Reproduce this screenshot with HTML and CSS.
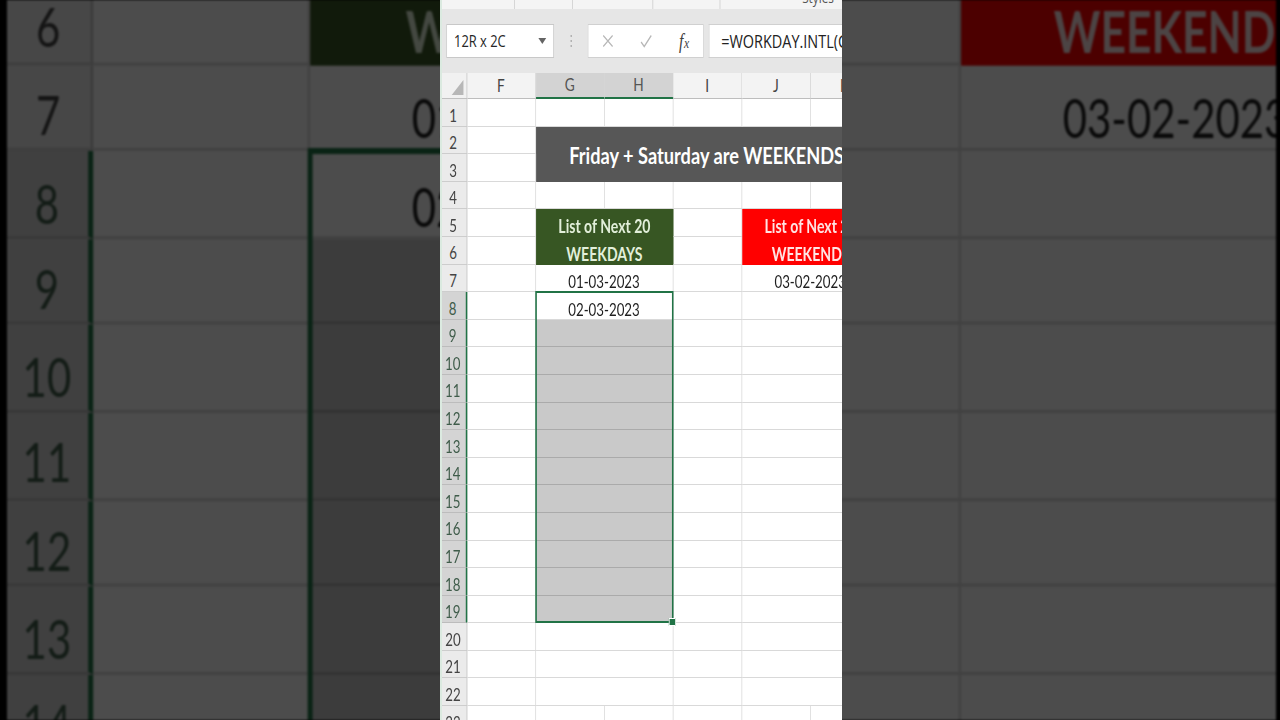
FILE: index.html
```html
<!DOCTYPE html>
<html lang="en">
<head>
<meta charset="utf-8">
<title>WORKDAY.INTL – Excel</title>
<link rel="stylesheet" href="styles.css">
</head>
<body>
<div class="stage">
  <div class="backdrop" aria-hidden="true"><div class="backdrop-frame"></div></div>
  <main class="frame">
    <div class="excel">
      <div class="ribbon">
        <div class="rgroup g1"></div>
        <div class="rgroup g2"></div>
        <div class="rgroup g3"></div>
        <div class="rgroup g4"></div>
        <div class="rgroup g5"><span class="rlabel">Styles</span></div>
      </div>
      <div class="formula-bar">
        <div class="name-box"><span class="name-text">12R x 2C</span><span class="caret"></span></div>
        <div class="grip"><svg viewBox="0 0 6 14" width="6" height="14"><circle cx="3" cy="2" r="1.1"/><circle cx="3" cy="7" r="1.1"/><circle cx="3" cy="12" r="1.1"/></svg></div>
        <div class="fx-box">
          <span class="fx-slot"><svg class="ico" viewBox="0 0 16 14" width="16" height="14" preserveAspectRatio="none"><path d="M2 1.5L14 12.5M14 1.5L2 12.5"/></svg></span>
          <span class="fx-slot"><svg class="ico" viewBox="0 0 16 14" width="16" height="14" preserveAspectRatio="none"><path d="M1.5 8L5.5 12.5L14.5 1.5"/></svg></span>
          <span class="fx-slot fx"><i>f</i><i class="fx-x">x</i></span>
        </div>
        <div class="formula-input">=WORKDAY.INTL(G7,1,7)</div>
      </div>
      <div class="sheet">
        <div class="c corner"><span class="corner-tri"></span></div>
        <div class="c ch">F</div><div class="c ch on">G</div><div class="c ch on">H</div><div class="c ch">I</div><div class="c ch">J</div><div class="c ch">K</div><div class="c ch">L</div>

        <div class="c rh">1</div><div class="c"></div><div class="c"></div><div class="c"></div><div class="c"></div><div class="c"></div><div class="c"></div><div class="c"></div>
        <div class="c rh">2</div><div class="c"></div><div class="c title">Friday + Saturday are WEEKENDS</div>
        <div class="c rh">3</div><div class="c"></div>
        <div class="c rh">4</div><div class="c"></div><div class="c"></div><div class="c"></div><div class="c"></div><div class="c"></div><div class="c"></div><div class="c"></div>
        <div class="c rh">5</div><div class="c"></div><div class="c span2 green">List of Next 20</div><div class="c"></div><div class="c span2 red">List of Next 20</div><div class="c"></div>
        <div class="c rh">6</div><div class="c"></div><div class="c span2 green">WEEKDAYS</div><div class="c"></div><div class="c span2 red">WEEKENDS</div><div class="c"></div>
        <div class="c rh">7</div><div class="c"></div><div class="c span2">01-03-2023</div><div class="c"></div><div class="c span2">03-02-2023</div><div class="c"></div>
        <div class="c rh on">8</div><div class="c"></div><div class="c span2">02-03-2023</div><div class="c"></div><div class="c span2"></div><div class="c"></div>
        <div class="c rh on">9</div><div class="c"></div><div class="c span2 sel"></div><div class="c"></div><div class="c span2"></div><div class="c"></div>
        <div class="c rh on">10</div><div class="c"></div><div class="c span2 sel"></div><div class="c"></div><div class="c span2"></div><div class="c"></div>
        <div class="c rh on">11</div><div class="c"></div><div class="c span2 sel"></div><div class="c"></div><div class="c span2"></div><div class="c"></div>
        <div class="c rh on">12</div><div class="c"></div><div class="c span2 sel"></div><div class="c"></div><div class="c span2"></div><div class="c"></div>
        <div class="c rh on">13</div><div class="c"></div><div class="c span2 sel"></div><div class="c"></div><div class="c span2"></div><div class="c"></div>
        <div class="c rh on">14</div><div class="c"></div><div class="c span2 sel"></div><div class="c"></div><div class="c span2"></div><div class="c"></div>
        <div class="c rh on">15</div><div class="c"></div><div class="c span2 sel"></div><div class="c"></div><div class="c span2"></div><div class="c"></div>
        <div class="c rh on">16</div><div class="c"></div><div class="c span2 sel"></div><div class="c"></div><div class="c span2"></div><div class="c"></div>
        <div class="c rh on">17</div><div class="c"></div><div class="c span2 sel"></div><div class="c"></div><div class="c span2"></div><div class="c"></div>
        <div class="c rh on">18</div><div class="c"></div><div class="c span2 sel"></div><div class="c"></div><div class="c span2"></div><div class="c"></div>
        <div class="c rh on">19</div><div class="c"></div><div class="c span2 sel"></div><div class="c"></div><div class="c span2"></div><div class="c"></div>
        <div class="c rh">20</div><div class="c"></div><div class="c span2"></div><div class="c"></div><div class="c span2"></div><div class="c"></div>
        <div class="c rh">21</div><div class="c"></div><div class="c span2"></div><div class="c"></div><div class="c span2"></div><div class="c"></div>
        <div class="c rh">22</div><div class="c"></div><div class="c span2"></div><div class="c"></div><div class="c span2"></div><div class="c"></div>
        <div class="c rh">23</div><div class="c"></div><div class="c"></div><div class="c"></div><div class="c"></div><div class="c"></div><div class="c"></div><div class="c"></div>

        <div class="selection"></div>
      </div>
    </div>
  </main>
</div>
<script src="script.js"></script>
</body>
</html>
```

FILE: styles.css
```css
html, body {
  margin: 0;
  padding: 0;
  background: #000;
  overflow: hidden;
}

.stage {
  position: relative;
  width: 1280px;
  height: 720px;
  box-sizing: border-box;
  padding-left: 440px;
  display: flex;
  overflow: hidden;
  background: #000;
}

/* dimmed, enlarged copy of the video behind the centre strip */
.backdrop {
  position: absolute;
  inset: 0;
  overflow: hidden;
  filter: brightness(0.3) blur(1px);
}

.backdrop-frame {
  margin-left: 440px;
  width: 402px;
  height: 720px;
  overflow: hidden;
  transform: scale(3.157);
  transform-origin: 200.8px 357.4px;
}

.frame {
  position: relative;
  width: 402px;
  height: 720px;
  overflow: hidden;
  background: #fff;
}

.frame::after {
  content: "";
  position: absolute;
  left: 0;
  top: 0;
  bottom: 0;
  width: 2px;
  background: #dbeae0;
}

/* the captured video is squeezed horizontally */
.excel {
  width: 515px;
  height: 720px;
  transform: scaleX(0.781);
  transform-origin: 0 0;
  background: #fff;
  font-family: Lato, "Open Sans", sans-serif;
}

/* ribbon remnant */
.ribbon {
  height: 9px;
  display: flex;
  overflow: hidden;
  background: #f4f4f4;
}

.rgroup {
  flex: none;
  height: 9px;
  box-sizing: border-box;
  display: flex;
  justify-content: center;
  align-items: flex-end;
  border-right: 1px solid #cdcdcd;
}

.g1 { width: 96px; }
.g2 { width: 74px; }
.g3 { width: 103px; }
.g4 { width: 86px; }
.g5 { width: 250px; border-right: none; }

.rlabel {
  font-family: "Open Sans", sans-serif;
  font-size: 15px;
  line-height: 24px;
  color: #555;
}

/* formula bar */
.formula-bar {
  height: 64px;
  box-sizing: border-box;
  padding-top: 15px;
  display: flex;
  align-items: flex-start;
  background: #e6e6e6;
  font-family: "Open Sans", sans-serif;
  font-size: 16.5px;
  color: #262626;
}

.name-box {
  flex: none;
  margin-left: 8px;
  width: 138px;
  height: 34px;
  box-sizing: border-box;
  border: 1px solid #c8c8c8;
  background: #fff;
  display: flex;
  align-items: center;
  padding: 0 9px;
  line-height: 32px;
}

.name-text {
  flex: 1;
  white-space: nowrap;
}

.caret {
  width: 0;
  height: 0;
  border-left: 5px solid transparent;
  border-right: 5px solid transparent;
  border-top: 6px solid #646464;
}

.grip {
  flex: none;
  width: 43px;
  height: 34px;
  display: flex;
  justify-content: center;
  align-items: center;
  fill: #a9a9a9;
}

.fx-box {
  flex: none;
  width: 149px;
  height: 34px;
  box-sizing: border-box;
  border: 1px solid #d0d0d0;
  background: #fff;
  display: flex;
  align-items: center;
}

.fx-slot {
  width: 50px;
  height: 32px;
  display: flex;
  justify-content: center;
  align-items: center;
}

.ico path {
  fill: none;
  stroke: #b7b7b7;
  stroke-width: 1.6;
}

.fx {
  font-family: "Liberation Serif", serif;
  font-size: 20px;
  color: #404040;
}

.fx-x {
  font-size: 15px;
  margin-left: 1px;
  margin-top: 4px;
}

.formula-input {
  margin-left: 6px;
  flex: 1;
  min-width: 0;
  height: 34px;
  box-sizing: border-box;
  border: 1px solid #d0d0d0;
  border-right: none;
  background: #fff;
  padding-left: 15px;
  font-size: 18.5px;
  line-height: 32px;
  white-space: nowrap;
  overflow: hidden;
  color: #222;
}

/* sheet grid */
.sheet {
  position: relative;
  display: grid;
  grid-template-columns: 34.5px repeat(7, 88px);
  grid-template-rows: 26px repeat(23, 27.6px);
  font-size: 17px;
  color: #1e1e1e;
}

.c {
  box-sizing: border-box;
  min-width: 0;
  border-right: 1px solid #d9d9d9;
  border-bottom: 1px solid #d9d9d9;
  display: flex;
  align-items: flex-start;
  justify-content: center;
  padding-top: 3.5px;
  line-height: 27.6px;
  white-space: nowrap;
  overflow: hidden;
}

.span2 { grid-column: span 2; }

.corner {
  background: #f1f1f1;
  border-right-color: #c6c6c6;
  border-bottom-color: #c0c0c0;
  position: relative;
  padding-top: 0;
}

.corner-tri {
  position: absolute;
  right: 4px;
  bottom: 3px;
  width: 0;
  height: 0;
  border-left: 15px solid transparent;
  border-bottom: 15px solid #b7b7b7;
}

.ch {
  background: #f3f3f3;
  border-right-color: #d4d4d4;
  border-bottom-color: #bdbdbd;
  align-items: center;
  padding-top: 0;
  font-size: 17.5px;
  line-height: 26px;
  color: #444;
}

.ch.on {
  background: #d3d3d3;
  border-bottom: 2px solid #217346;
  color: #555;
}

.rh {
  background: #ebebeb;
  border-right-color: #c6c6c6;
  border-bottom-color: #cdcdcd;
  padding-top: 2.5px;
  color: #444;
}

.rh.on {
  background: #d4d4d4;
  border-right: 2px solid #217346;
  border-bottom-color: #bcbcbc;
  color: #3f5c4a;
}

.title {
  grid-column: span 6;
  grid-row: span 2;
  border: none;
  background: #575757;
  color: #fff;
  font-weight: 700;
  font-size: 23.3px;
  align-items: center;
  justify-content: flex-start;
  padding-top: 4px;
  padding-left: 43px;
}

.green {
  border: none;
  background: #375623;
  color: #e2efda;
  font-weight: 700;
  font-size: 18px;
  padding-top: 4px;
}

.red {
  border: none;
  background: #ff0000;
  color: #ffe3e3;
  font-weight: 700;
  font-size: 18px;
  padding-top: 4px;
}

.sel {
  background: #c9c9c9;
  border-bottom-color: #aaaaaa;
}

.selection {
  position: absolute;
  grid-row: 9 / 21;
  grid-column: 3 / 5;
  top: -1px;
  left: -1px;
  right: 0;
  bottom: 0;
  border: 2px solid #217346;
  pointer-events: none;
}

.selection::after {
  content: "";
  position: absolute;
  right: -5px;
  bottom: -5px;
  width: 7px;
  height: 6px;
  background: #217346;
  border: 1px solid #fff;
}
```

FILE: script.js
```js
(function () {
  var src = document.querySelector('.frame .excel');
  var target = document.querySelector('.backdrop-frame');
  if (src && target) {
    target.appendChild(src.cloneNode(true));
  }
})();
```
